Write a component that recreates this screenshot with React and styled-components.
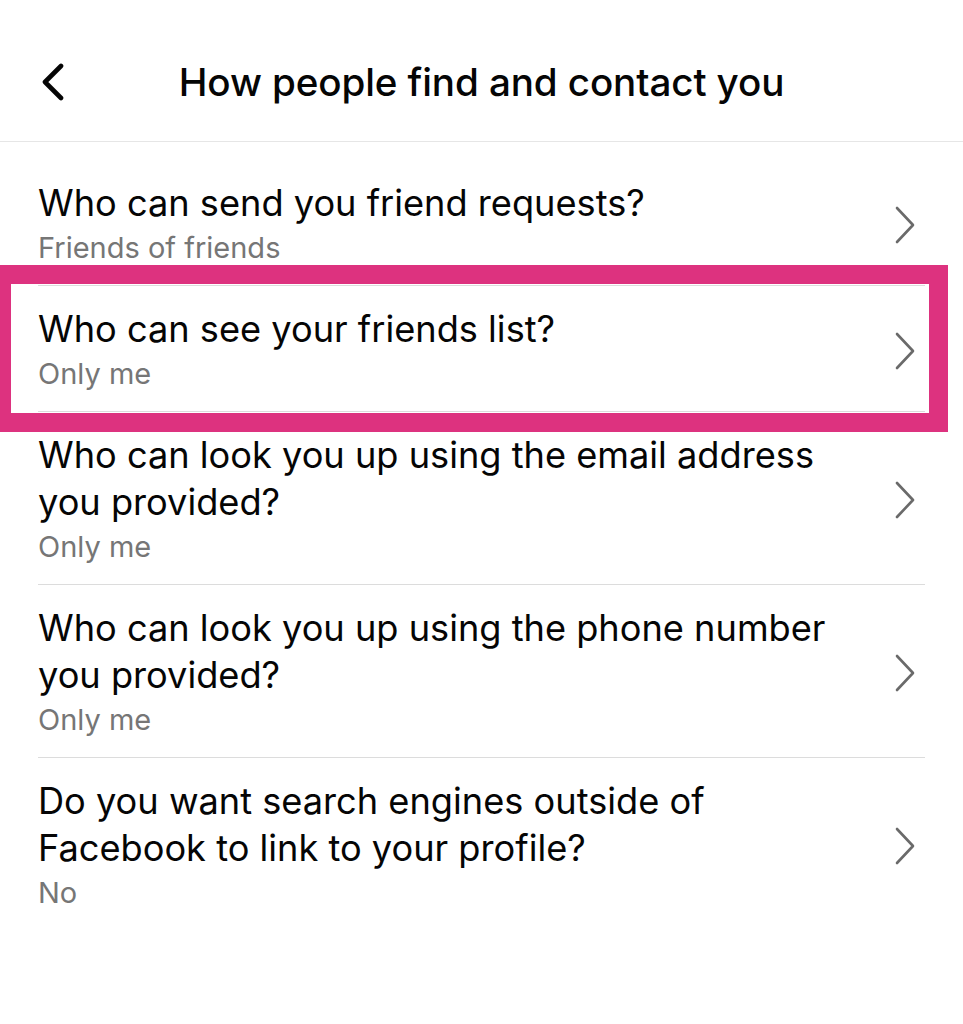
import styled, { createGlobalStyle } from "styled-components";

const GlobalStyle = createGlobalStyle`
  html, body {
    margin: 0;
    padding: 0;
    background: #ffffff;
  }
  body {
    font-family: Inter, "Noto Sans", "Liberation Sans", sans-serif;
    color: #050505;
  }
`;

const Page = styled.main`
  width: 963px;
  min-height: 1024px;
  background: #ffffff;
`;

const Header = styled.header`
  display: grid;
  grid-template-columns: 1fr auto 1fr;
  align-items: center;
  height: 142px;
  border-bottom: 1px solid #e6e6e6;
  box-sizing: border-box;
  padding-top: 22px;
`;

const BackButton = styled.button`
  justify-self: start;
  display: flex;
  align-items: center;
  background: none;
  border: 0;
  padding: 0;
  margin-left: 40px;
  cursor: pointer;
`;

const Title = styled.h1`
  margin: 0;
  font-size: 38.6px;
  font-weight: 500;
  letter-spacing: -0.1px;
  color: #050505;
`;

const List = styled.section`
  padding-top: 18px;
`;

const Row = styled.div`
  position: relative;
  display: flex;
  align-items: center;
  margin: 0 38px;
  padding: 20px 0 16px;
  border-bottom: ${p => (p.$last ? "none" : "1px solid #dcdcdc")};
`;

const Texts = styled.div`
  flex: 1;
  min-width: 0;
`;

const Question = styled.div`
  font-size: 36.2px;
  line-height: 47px;
  font-weight: 400;
  color: #050505;
`;

const Answer = styled.div`
  font-size: 29px;
  line-height: 42px;
  color: #767676;
`;

const Chevron = styled.svg`
  flex: none;
  margin: 0 9px 0 20px;
`;

const Highlight = styled.div`
  position: absolute;
  top: -21px;
  bottom: -21px;
  left: -46px;
  right: -23px;
  border: 19px solid #dd327f;
  pointer-events: none;
`;

const items = [
  { q: ["Who can send you friend requests?"], a: "Friends of friends" },
  { q: ["Who can see your friends list?"], a: "Only me", marked: true },
  { q: ["Who can look you up using the email address", "you provided?"], a: "Only me" },
  { q: ["Who can look you up using the phone number", "you provided?"], a: "Only me" },
  { q: ["Do you want search engines outside of", "Facebook to link to your profile?"], a: "No" },
];

export default function App() {
  return (
    <Page>
      <GlobalStyle />
      <Header>
        <BackButton aria-label="Back">
          <svg width="26" height="38" viewBox="0 0 26 38">
            <path d="M21 3 L5 19 L21 35" fill="none" stroke="#050505" strokeWidth="4.6" strokeLinecap="round" strokeLinejoin="round" />
          </svg>
        </BackButton>
        <Title>How people find and contact you</Title>
        <span />
      </Header>
      <List>
        {items.map((item, i) => (
          <Row key={i} $last={i === items.length - 1}>
            <Texts>
              <Question>
                {item.q.map(l => <div key={l}>{l}</div>)}
              </Question>
              <Answer>{item.a}</Answer>
            </Texts>
            <Chevron width="22" height="40" viewBox="0 0 22 40">
              <path d="M3 3 L19 20 L3 37" fill="none" stroke="#6a6a6a" strokeWidth="2.6" strokeLinecap="round" strokeLinejoin="round" />
            </Chevron>
            {item.marked && <Highlight />}
          </Row>
        ))}
      </List>
    </Page>
  );
}
